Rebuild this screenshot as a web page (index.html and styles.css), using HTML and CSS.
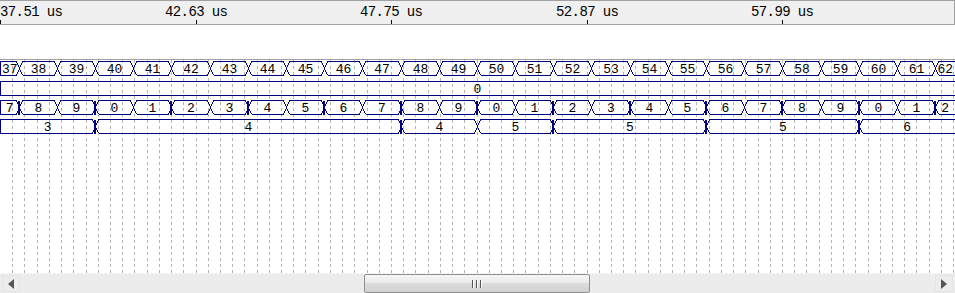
FILE: index.html
```html
<!DOCTYPE html>
<html>
<head>
    <meta charset="UTF-8">
    <title>wave.html</title>
    <link rel="stylesheet" href="styles.css">
</head>
<body>
    <div class="viewer">
        <div class="ruler" id="ruler"></div>
        <div class="spacer"></div>
        <div class="waves">
            <svg id="wave" width="955" height="213" shape-rendering="crispEdges"></svg>
        </div>
        <div class="hscroll">
            <div class="sbtn">
                <svg width="8" height="10"><polygon points="7,0 7,10 1,5" fill="#555"/></svg>
            </div>
            <div class="track">
                <div class="thumb">
                    <span class="grip"></span><span class="grip"></span><span class="grip"></span>
                </div>
            </div>
            <div class="sbtn">
                <svg width="8" height="10"><polygon points="1,0 1,10 7,5" fill="#555"/></svg>
            </div>
        </div>
    </div>

    <script>
        let W, PX, T0, NS;
        let ruler, svg;

        W = 955;
        PX = 195.5 / 5.12;
        T0 = 37.51;
        NS = "http://www.w3.org/2000/svg";

        ruler = document.getElementById("ruler");
        svg = document.getElementById("wave");

        function xt(t){
            return Math.round((t - T0) * PX);
        }

        // time ruler
        for(let i=0;i<5;i++){
            let x = Math.round(i * 195.5);
            let lbl = document.createElement("span");
            lbl.className = "lbl";
            lbl.textContent = (T0 + 5.12 * i).toFixed(2) + " us";
            lbl.style.left = Math.max(0, x - 31) + "px";
            ruler.appendChild(lbl);
            let tick = document.createElement("span");
            tick.className = "tick";
            tick.style.left = x + "px";
            ruler.appendChild(tick);
        }

        function el(name, attrs, text){
            let e = document.createElementNS(NS, name);
            for(let k in attrs) e.setAttribute(k, attrs[k]);
            if(text !== undefined) e.textContent = text;
            svg.appendChild(e);
            return e;
        }

        // dashed grid
        for(let k=1;k<80;k++){
            let x = Math.round(k * PX * 0.32) + 0.5;
            if(x > W) break;
            el("line", {x1:x, y1:0, x2:x, y2:213, "class":"grid"});
        }

        // bus row: edges = [{t, thick}], labels one more than edges
        function bus(top, edges, labels){
            let s = 3;
            let y1 = top + 0.5, y2 = top + 14.5;
            let xs = edges.map(e => xt(e.t) + 0.5);
            let ends = [0].concat(xs, [W]);
            let d = "M0.5 " + y1 + " V" + y2;
            for(let i=0;i<ends.length-1;i++){
                let a = i == 0 ? 0 : ends[i] + s;
                let b = i == ends.length-2 ? W : ends[i+1] - s;
                d += " M" + a + " " + y1 + " H" + b + " M" + a + " " + y2 + " H" + b;
                el("text", {x:(ends[i] + ends[i+1]) / 2, y:top + 8, "class":"val"}, labels[i]);
            }
            for(let i=0;i<xs.length;i++){
                let x = xs[i];
                d += " M" + (x-s) + " " + y1 + " L" + (x+s) + " " + y2;
                d += " M" + (x-s) + " " + y2 + " L" + (x+s) + " " + y1;
                if(edges[i].thick){
                    el("rect", {x:x-1.5, y:y1, width:2, height:14, "class":"glitch"});
                }
            }
            el("path", {d:d, "class":"sig"});
        }

        let e1 = [], l1 = [37], e3 = [], l3 = [7];
        for(let n=38;n<=62;n++){
            e1.push({t:n});
            l1.push(n);
            e3.push({t:n, thick:n % 2 == 0});
            l3.push(n % 10);
        }
        bus(1, e1, l1);
        bus(21, [], ["0"]);
        bus(40, e3, l3);
        bus(59, [{t:40, thick:true}, {t:48, thick:true}, {t:50}, {t:52, thick:true}, {t:56, thick:true}, {t:60, thick:true}],
            ["3", "4", "4", "5", "5", "5", "6"]);
    </script>
</body>
</html>
```

FILE: styles.css
```css
body {
    margin: 0;
    background: #ffffff;
    font-family: "Liberation Mono", "DejaVu Sans Mono", monospace;
}

.viewer {
    width: 955px;
    height: 293px;
    display: flex;
    flex-direction: column;
    overflow: hidden;
}

.ruler {
    position: relative;
    flex: none;
    box-sizing: border-box;
    width: 955px;
    height: 25px;
    background: #f0f0f0;
    border: 1px solid #a0a0a0;
    border-left: none;
}

.lbl {
    position: absolute;
    top: 0;
    font-size: 14px;
    letter-spacing: -0.6px;
    line-height: 23px;
    color: #000000;
    white-space: pre;
}

.tick {
    position: absolute;
    bottom: 0;
    width: 1px;
    height: 4px;
    background: #000000;
}

.spacer {
    flex: none;
    height: 34px;
    border-bottom: 1px solid #a0a0a0;
}

.waves {
    flex: none;
    height: 213px;
}

.waves svg {
    display: block;
}

.grid {
    stroke: #b4b4b4;
    stroke-width: 1;
    stroke-dasharray: 3 3;
}

.sig {
    fill: none;
    stroke: #000080;
    stroke-width: 1;
}

.glitch {
    fill: #000080;
}

.val {
    font-family: "Liberation Mono", "DejaVu Sans Mono", monospace;
    font-size: 13px;
    text-anchor: middle;
    dominant-baseline: central;
    fill: #000000;
}

.hscroll {
    flex: none;
    height: 20px;
    display: flex;
    background: #ececec;
    border-top: 1px solid #f4f4f4;
    box-sizing: border-box;
}

.sbtn {
    width: 18px;
    margin: 1px 2px;
    display: flex;
    align-items: center;
    justify-content: center;
    border: 1px solid #e4e4e4;
    box-sizing: border-box;
}

.track {
    flex: 1;
    display: flex;
}

.thumb {
    margin-left: 342px;
    width: 226px;
    box-sizing: border-box;
    border: 1px solid #8e8e8e;
    border-radius: 2px;
    background: linear-gradient(#f6f6f6, #ebebeb 45%, #dcdcdc 50%, #d2d2d2);
    display: flex;
    align-items: center;
    justify-content: center;
    gap: 2px;
}

.grip {
    width: 1px;
    height: 8px;
    background: #555555;
    border-right: 1px solid #ffffff;
}
```
